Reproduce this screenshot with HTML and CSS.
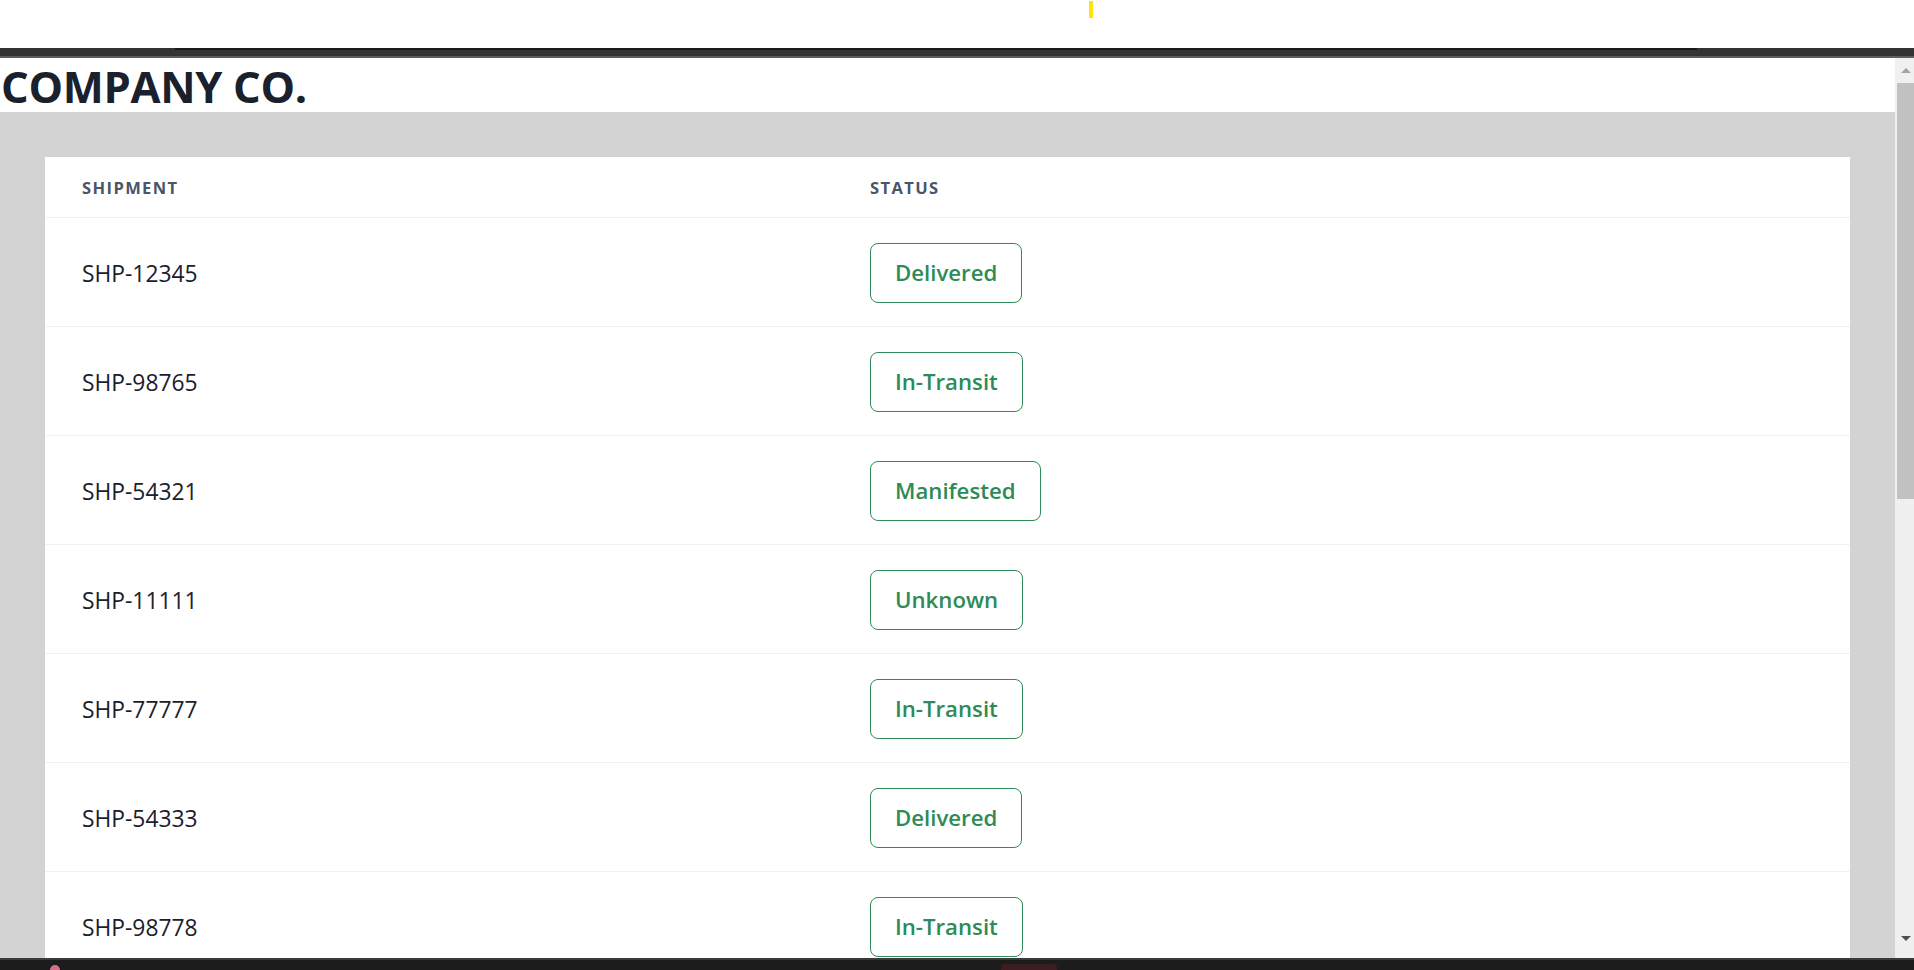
FILE: index.html
```html
<!DOCTYPE html>
<html lang="en">

<head>
  <meta charset="UTF-8">
  <title>Shipments</title>
  <link rel="stylesheet" href="styles.css">
</head>

<body>

  <div class="topband">
    <span class="caret"></span>
  </div>

  <div class="chrome">
    <div class="chrome__edge"></div>
    <div class="chrome__line"></div>
  </div>

  <div class="window">
    <div class="page">
      <h1 class="brand">COMPANY CO.</h1>

      <div class="content">
        <div class="card">
          <table class="shipments">
            <colgroup>
              <col class="col-id">
              <col>
            </colgroup>
            <thead>
              <tr>
                <th>Shipment</th>
                <th>Status</th>
              </tr>
            </thead>
            <tbody>
              <tr>
                <td>SHP-12345</td>
                <td><span class="badge">Delivered</span></td>
              </tr>
              <tr>
                <td>SHP-98765</td>
                <td><span class="badge">In-Transit</span></td>
              </tr>
              <tr>
                <td>SHP-54321</td>
                <td><span class="badge">Manifested</span></td>
              </tr>
              <tr>
                <td>SHP-11111</td>
                <td><span class="badge">Unknown</span></td>
              </tr>
              <tr>
                <td>SHP-77777</td>
                <td><span class="badge">In-Transit</span></td>
              </tr>
              <tr>
                <td>SHP-54333</td>
                <td><span class="badge">Delivered</span></td>
              </tr>
              <tr>
                <td>SHP-98778</td>
                <td><span class="badge">In-Transit</span></td>
              </tr>
            </tbody>
          </table>
        </div>
      </div>
    </div>

    <!-- fake scrollbar -->
    <div class="scrollbar">
      <div class="scrollbar__btn"><span class="arrow-up"></span></div>
      <div class="scrollbar__thumb"></div>
      <div class="scrollbar__track"></div>
      <div class="scrollbar__btn scrollbar__btn--down"><span class="arrow-down"></span></div>
    </div>
  </div>

  <div class="taskbar">
    <span class="taskbar__icon"></span>
    <span class="taskbar__app"></span>
  </div>

</body>

</html>
```

FILE: styles.css
```css
html,
body {
  margin: 0;
  height: 970px;
  overflow: hidden;
}

body {
  font-family: "Open Sans", "Liberation Sans", sans-serif;
  background-color: #fff;
  color: #1a202c;
}

.topband {
  height: 48px;
  padding: 1px 0 0 1089px;
  box-sizing: border-box;
  background: #fff;
}

.caret {
  display: block;
  width: 4px;
  height: 17px;
  background-color: #ffe600;
}

.chrome {
  height: 10px;
  background-color: #333;
}

.chrome__edge {
  height: 2px;
  margin: 0 217px 0 175px;
  background-color: #1a1a1a;
}

.chrome__line {
  height: 2px;
  margin-top: 6px;
  background-color: #5e5e5e;
}

.window {
  display: flex;
  height: 900px;
}

.page {
  flex: 1;
  overflow: hidden;
  background: #fff;
}

.brand {
  margin: 0;
  padding: 2px 0 0 1px;
  height: 54px;
  box-sizing: border-box;
  font-size: 43.5px;
  line-height: 54px;
  font-weight: 700;
  color: #1a202c;
  letter-spacing: -0.3px;
}

.content {
  background-color: #d3d3d3;
  padding: 45px 45px 0;
}

.card {
  background: #fff;
}

.shipments {
  width: 100%;
  border-collapse: collapse;
  table-layout: fixed;
}

.col-id {
  width: 825px;
}

.shipments th {
  text-align: left;
  height: 60px;
  padding: 0 0 0 37px;
  font-size: 16.5px;
  font-weight: 700;
  letter-spacing: 1.4px;
  text-transform: uppercase;
  color: #4a5568;
  border-bottom: 1px solid #edf2f7;
}

.shipments th + th,
.shipments td + td {
  padding-left: 0;
}

.shipments td {
  height: 109px;
  padding: 2px 0 0 37px;
  box-sizing: border-box;
  font-size: 22.8px;
  color: #1a202c;
  border-bottom: 1px solid #edf2f7;
  vertical-align: middle;
}

.badge {
  display: inline-block;
  padding: 12px 24px;
  line-height: 34px;
  font-size: 22.2px;
  font-weight: 600;
  color: #2e8b57;
  border: 1px solid #2e8b57;
  border-radius: 8px;
}

.scrollbar {
  width: 19px;
  display: flex;
  flex-direction: column;
  background-color: #f0f0f0;
}

.scrollbar__btn {
  height: 25px;
  display: flex;
  justify-content: center;
  align-items: center;
  padding-left: 2px;
}

.scrollbar__btn--down {
  height: 24px;
  align-items: flex-start;
}

.arrow-up {
  width: 0;
  height: 0;
  border-left: 5px solid transparent;
  border-right: 5px solid transparent;
  border-bottom: 5px solid #a3a3a3;
}

.arrow-down {
  width: 0;
  height: 0;
  margin-top: 2px;
  border-left: 5px solid transparent;
  border-right: 5px solid transparent;
  border-top: 5px solid #505050;
}

.scrollbar__thumb {
  height: 416px;
  margin-left: 2px;
  background-color: #c1c1c1;
}

.scrollbar__track {
  flex: 1;
}

.taskbar {
  height: 12px;
  box-sizing: border-box;
  border-top: 2px solid #3a3a3a;
  background-color: #1c1c1c;
  display: flex;
  align-items: flex-end;
  padding-left: 50px;
}

.taskbar__icon {
  width: 10px;
  height: 5px;
  border-radius: 5px 5px 0 0;
  background-color: #d6708a;
}

.taskbar__app {
  width: 56px;
  height: 6px;
  margin-left: 941px;
  border-radius: 4px 4px 0 0;
  background-color: #3b1e20;
}
```
